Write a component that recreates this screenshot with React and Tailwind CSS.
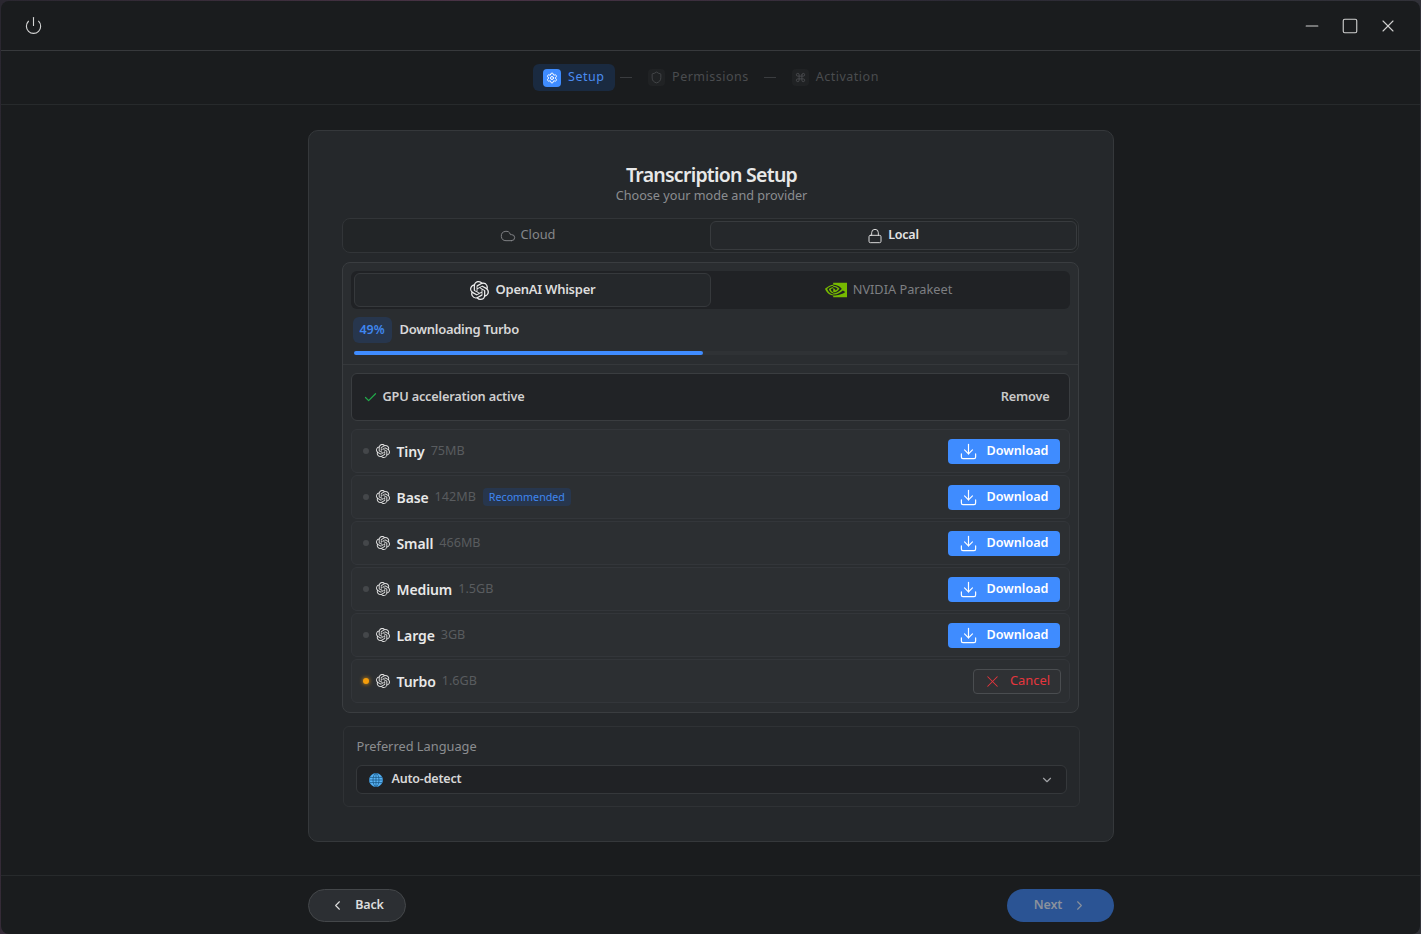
import { Check, ChevronDown, ChevronLeft, ChevronRight, Cloud, Command, Download, Lock, Minus, Power, Settings, Shield, Square, X } from 'lucide-react';
import { SiNvidia, SiOpenai } from 'react-icons/si';

const models = [
  { name: 'Tiny', size: '75MB' },
  { name: 'Base', size: '142MB', recommended: true },
  { name: 'Small', size: '466MB' },
  { name: 'Medium', size: '1.5GB' },
  { name: 'Large', size: '3GB' },
  { name: 'Turbo', size: '1.6GB', downloading: true },
];

function GlobeIcon() {
  return (
    <svg viewBox="0 0 14 14" className="h-[14px] w-[14px]" fill="none" stroke="#14507e" strokeWidth="0.7">
      <circle cx="7" cy="7" r="6.6" fill="#5ab4f5" stroke="#3f9be0" />
      <ellipse cx="7" cy="7" rx="3" ry="6.4" />
      <path d="M7 .6v12.8M1 4.4h12M.5 7h13M1 9.6h12" />
    </svg>
  );
}

function ModelRow({ model }) {
  return (
    <div className="flex h-[44px] items-center rounded-md border border-[#33363a] bg-[#2c2f32] pl-[11px] pr-[9px]">
      <span className={`h-[6px] w-[6px] rounded-full ${model.downloading ? 'bg-[#f59e0b] shadow-[0_0_4px_#f59e0b]' : 'bg-[#44474a]'}`} />
      <SiOpenai className="ml-[7px] h-[14px] w-[14px] text-[#e4e4e4]" />
      <span className="ml-[7px] text-[14px] font-semibold tracking-[-0.1px] text-[#e8e8e8]">{model.name}</span>
      <span className="ml-[6px] pb-px text-[12.6px] leading-[16px] text-[#595c5f]">{model.size}</span>
      {model.recommended && (
        <span className="ml-[7px] rounded-[4px] bg-[#27364d] px-[6px] pb-px pt-[2px] text-[10.7px] leading-[15px] text-[#3f86f0]">Recommended</span>
      )}
      <div className="ml-auto">
        {model.downloading ? (
          <button type="button" className="-mr-px flex h-[25px] w-[88px] items-center justify-center gap-[8px] rounded-[4px] border border-[#4a4d50] bg-[#2f3134] text-[12.9px] text-[#e5363d]">
            <X className="h-[19px] w-[19px]" strokeWidth={1.3} />
            Cancel
          </button>
        ) : (
          <button type="button" className="flex h-[25px] w-[112px] items-center justify-center gap-[9px] rounded-[4px] bg-[#3f8cff] text-[12.6px] font-semibold text-white">
            <Download className="h-[19px] w-[19px]" strokeWidth={1.5} />
            Download
          </button>
        )}
      </div>
    </div>
  );
}

export default function App() {
  return (
    <div className="h-[934px] overflow-hidden bg-[linear-gradient(100deg,#2a2730,#4a3346_30%,#2c2a35_60%,#33343a)] p-px font-['Noto_Sans',sans-serif]">
      <div className="flex h-[933px] flex-col rounded-[8px] bg-[#1a1c1e]">
        <div className="flex h-[50px] shrink-0 items-center justify-between border-b border-[#37393c] pl-[23px] pr-[22px]">
          <Power className="h-[19px] w-[19px] text-[#d6d6d6]" strokeWidth={1.4} />
          <div className="flex items-center gap-[19px] text-[#d0d0d0]">
            <Minus className="h-[20px] w-[20px]" strokeWidth={1.3} />
            <Square className="h-[18px] w-[18px]" strokeWidth={1.5} />
            <X className="h-[20px] w-[20px]" strokeWidth={1.3} />
          </div>
        </div>

        <div className="flex h-[54px] shrink-0 items-center justify-center border-b border-[#272a2c] pr-[9px] text-[12.5px] tracking-[0.5px]">
          <div className="flex h-[27px] w-[82px] items-center gap-[7px] rounded-md bg-[#1a2a40] pl-[10px] text-[#4a8cf0]">
            <span className="flex h-[18px] w-[18px] items-center justify-center rounded-[4px] bg-[#3f8cff]">
              <Settings className="h-[12px] w-[12px] text-white" />
            </span>
            Setup
          </div>
          <span className="ml-[5px] h-px w-[12px] bg-[#3a3c3f]" />
          <div className="ml-[16px] flex items-center gap-[7px] text-[#4a4c4f]">
            <span className="flex h-[17px] w-[17px] items-center justify-center rounded-[4px] bg-[#202224]">
              <Shield className="h-[13px] w-[13px]" strokeWidth={1.5} />
            </span>
            Permissions
          </div>
          <span className="ml-[15px] h-px w-[12px] bg-[#3a3c3f]" />
          <div className="ml-[16px] flex items-center gap-[7px] text-[#4a4c4f]">
            <span className="flex h-[17px] w-[17px] items-center justify-center rounded-[4px] bg-[#202224]">
              <Command className="h-[11px] w-[11px]" />
            </span>
            Activation
          </div>
        </div>

        <div className="flex flex-1 flex-col items-center pt-[25px]">
          <div className="flex h-[712px] w-[806px] flex-col rounded-[10px] border border-[#35383b] bg-[#25282b] px-[33px] pt-[31px]">
            <div className="pl-[2px] text-center">
              <h1 className="text-[19.5px] leading-[26px] font-semibold tracking-[-0.75px] text-[#e8e8e8]">Transcription Setup</h1>
              <p className="text-[12.65px] leading-[14px] text-[#8b8d90]">Choose your mode and provider</p>
            </div>

            <div className="mt-[16px] flex h-[35px] w-[737px] items-center rounded-lg border border-[#323538] bg-[#222527] px-[1px]">
              <div className="flex flex-1 items-center justify-center gap-[5px] pl-[2px] text-[12.8px] text-[#85878a]">
                <Cloud className="h-[16px] w-[16px]" strokeWidth={1.4} />
                <span className="-mt-[4px] leading-[16px]">Cloud</span>
              </div>
              <div className="flex h-[29px] w-[367px] items-center justify-center gap-[5px] rounded-md border border-[#383b3e] bg-[#25282b] text-[12.5px] font-semibold tracking-[-0.25px] text-[#e5e5e5]">
                <Lock className="h-[16px] w-[16px]" strokeWidth={1.4} />
                Local
              </div>
            </div>

            <div className="mt-[9px] h-[451px] w-[737px] rounded-lg border border-[#3a3d40] bg-[#2a2d30] px-[8px] pt-[8px]">
              <div className="flex h-[38px] items-center rounded-md bg-[#202225] pl-[3px]">
                <div className="flex h-[34px] w-[357px] items-center justify-center gap-[7px] rounded-md border border-[#36393c] bg-[#25282b] pl-px text-[13px] font-semibold tracking-[-0.25px] text-[#dddddd]">
                  <SiOpenai className="h-[19px] w-[19px] text-[#eeeeee]" />
                  OpenAI Whisper
                </div>
                <div className="flex flex-1 items-center justify-center gap-[6px] pr-[3px] text-[12.75px] text-[#7d7f82]">
                  <SiNvidia className="h-[22px] w-[22px] text-[#76b900]" />
                  NVIDIA Parakeet
                </div>
              </div>

              <div className="mt-[8px] flex items-center gap-[8px] pl-[2px]">
                <span className="flex h-[26px] w-[39px] items-center justify-center rounded-md bg-[#27364d] text-[12.5px] font-semibold text-[#3f86f0]">49%</span>
                <span className="text-[13px] font-semibold tracking-[-0.28px] text-[#d8d8d8]">Downloading Turbo</span>
              </div>
              <div className="ml-[3px] mt-[8px] h-[4px] w-[714px] rounded-full bg-[#2f3235]">
                <div className="h-full w-[49%] rounded-full bg-[#3f8cff]" />
              </div>

              <div className="-mx-[8px] mt-[9px] border-t border-[#35383b] px-[8px] pt-[8px]">
                <div className="flex h-[48px] items-center rounded-md border border-[#3a3d40] bg-[#212326] pl-[11px] pr-[19px]">
                  <Check className="h-[15px] w-[15px] text-[#22a84a]" strokeWidth={2} />
                  <span className="ml-[5px] text-[12.75px] font-semibold tracking-[-0.2px] text-[#cfcfcf]">GPU acceleration active</span>
                  <span className="ml-auto text-[12.75px] font-semibold tracking-[-0.2px] text-[#c8c8c8]">Remove</span>
                </div>
              </div>

              <div className="mt-[8px] flex flex-col gap-[2px]">
                {models.map((model) => (
                  <ModelRow key={model.name} model={model} />
                ))}
              </div>
            </div>

            <div className="ml-px mt-[13px] h-[81px] w-[737px] rounded-md border border-[#2f3235] bg-[#25282b] px-[12px] pt-[11px]">
              <div className="pl-px text-[12.8px] leading-[16px] text-[#8b8d90]">Preferred Language</div>
              <div className="mt-[11px] flex h-[29px] items-center rounded-md border border-[#35383b] bg-[#202225] pl-[12px] pr-[12px]">
                <GlobeIcon />
                <span className="ml-[9px] text-[12.5px] font-semibold tracking-[-0.2px] text-[#d8d8d8]">Auto-detect</span>
                <ChevronDown className="ml-auto h-[14px] w-[14px] text-[#a0a2a5]" />
              </div>
            </div>
          </div>
        </div>

        <div className="flex h-[59px] shrink-0 items-start justify-between border-t border-[#272a2c] pl-[307px] pr-[306px] pt-[13px]">
          <button type="button" className="flex h-[33px] w-[98px] items-center justify-center gap-[10px] rounded-full border border-[#44474a] bg-[#2c2f33] text-[12.5px] font-semibold tracking-[-0.2px] text-[#dddddd]">
            <ChevronLeft className="h-[15px] w-[15px]" strokeWidth={1.75} />
            Back
          </button>
          <button type="button" className="flex h-[33px] w-[107px] items-center justify-center gap-[10px] rounded-full bg-[#2b5494] text-[12.5px] font-semibold tracking-[-0.2px] text-[#8a919c]">
            Next
            <ChevronRight className="h-[15px] w-[15px]" strokeWidth={1.75} />
          </button>
        </div>
      </div>
    </div>
  );
}
